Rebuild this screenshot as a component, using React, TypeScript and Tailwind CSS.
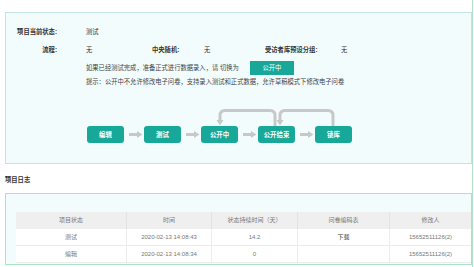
import React from 'react'

const font = { fontFamily: '"Liberation Sans", "Noto Sans CJK SC", sans-serif' }

const steps = ['编辑', '测试', '公开中', '公开结束', '锁库']

const logs = [
  { status: '测试', time: '2020-02-13 14:08:43', days: '14.2', file: '下载', user: '15652511126(2)' },
  { status: '编辑', time: '2020-02-13 14:08:34', days: '0', file: '', user: '15652511126(2)' },
]

const cols = ['w-[111px]', 'w-[85px]', 'w-[86px]', 'w-[92px]', 'w-[81px]']

function Arrow() {
  return (
    <svg width="20" height="17" viewBox="0 0 20 17">
      <line x1="5" y1="8.5" x2="14" y2="8.5" stroke="#c8c8c8" strokeWidth="3" />
      <polygon points="13,5 18.5,8.5 13,12" fill="#c8c8c8" />
    </svg>
  )
}

function FlowChart() {
  return (
    <div className="relative ml-[81px] mt-[17px] h-[39px] w-[266px]">
      {/* loop-back arrows */}
      <svg className="absolute left-0 top-0" width="266" height="39" viewBox="0 0 266 39" fill="none">
        <path d="M188 22 V11.5 Q188 6.5 183 6.5 H138 Q133 6.5 133 11.5 V17" stroke="#c8c8c8" strokeWidth="3" />
        <polygon points="129.5,16 136.5,16 133,21.5" fill="#c8c8c8" />
        <path d="M246 22 V11.5 Q246 6.5 241 6.5 H198 Q193 6.5 193 11.5 V17" stroke="#c8c8c8" strokeWidth="3" />
        <polygon points="189.5,16 196.5,16 193,21.5" fill="#c8c8c8" />
      </svg>
      <div className="flex pt-[22px]">
        {steps.map((s, i) => (
          <React.Fragment key={s}>
            {i > 0 && <Arrow />}
            <div className="relative flex h-[17px] w-[37px] items-center justify-center rounded-[3px] bg-[#17a899] text-[6.4px] font-bold text-white">
              {s}
            </div>
          </React.Fragment>
        ))}
      </div>
    </div>
  )
}

export default function App() {
  return (
    <div className="h-[267px] w-[474px] overflow-hidden bg-white text-[#333]" style={font}>
      <div className="h-[267px] w-[473px] border-r border-[#b4e3cd] pl-[5px] pt-[12px]">
        {/* current status panel */}
        <div className="h-[152px] w-[467px] border border-[#c4e2de] bg-[#f3fcfc] text-[6.3px]">
          <div className="flex h-[18px] items-center pt-[10px] box-content">
            <div className="w-[51px] text-right font-bold">项目当前状态:</div>
            <div className="ml-[29px]">测试</div>
          </div>
          <div className="flex h-[18px] items-center">
            <div className="w-[51px] text-right font-bold">流程:</div>
            <div className="ml-[29px] w-[66px]">无</div>
            <div className="w-[52px] font-bold">中央随机:</div>
            <div className="w-[61px]">无</div>
            <div className="w-[76px] font-bold">受访者库预设分组:</div>
            <div>无</div>
          </div>
          <div className="flex h-[18px] items-center pl-[80px] text-[#444]">
            <span>如果已经测试完成，准备正式进行数据录入，请 切换为</span>
            <button className="ml-[11px] h-[14px] w-[44px] bg-[#17a899] text-[6.3px] text-white">公开中</button>
          </div>
          <div className="flex h-[10px] items-center pl-[80px] text-[#444]">
            提示：公开中不允许修改电子问卷，支持录入测试和正式数据，允许草稿模式下修改电子问卷
          </div>
          <FlowChart />
        </div>

        <div className="mt-[11px] h-[10px] text-[6.3px] font-bold leading-[10px]">项目日志</div>

        {/* log panel */}
        <div className="mt-[8px] h-[72px] w-[467px] border border-[#a9e4c6] bg-[#f3fcfc] pl-[10px] pt-[18px]">
          <div className="w-[455px] text-[6px] text-[#777]">
            <div className="flex h-[17px] items-center bg-[#efefef]">
              {['项目状态', '时间', '状态持续时间（天）', '问卷编码表', '修改人'].map((h, i) => (
                <div key={h} className={`${cols[i]} flex h-full items-center justify-center ${i < 4 ? 'border-r border-[#e3e3e3]' : ''}`}>
                  {h}
                </div>
              ))}
            </div>
            {logs.map((r, idx) => (
              <div key={idx} className="flex h-[17px] items-center border-b border-[#ececec] bg-white">
                {[r.status, r.time, r.days, r.file, r.user].map((v, i) => (
                  <div
                    key={i}
                    className={`${cols[i]} flex h-full items-center justify-center ${i < 4 ? 'border-r border-[#ececec]' : ''} ${i === 3 ? 'text-[#333]' : ''}`}
                  >
                    {v}
                  </div>
                ))}
              </div>
            ))}
          </div>
        </div>
      </div>
    </div>
  )
}
